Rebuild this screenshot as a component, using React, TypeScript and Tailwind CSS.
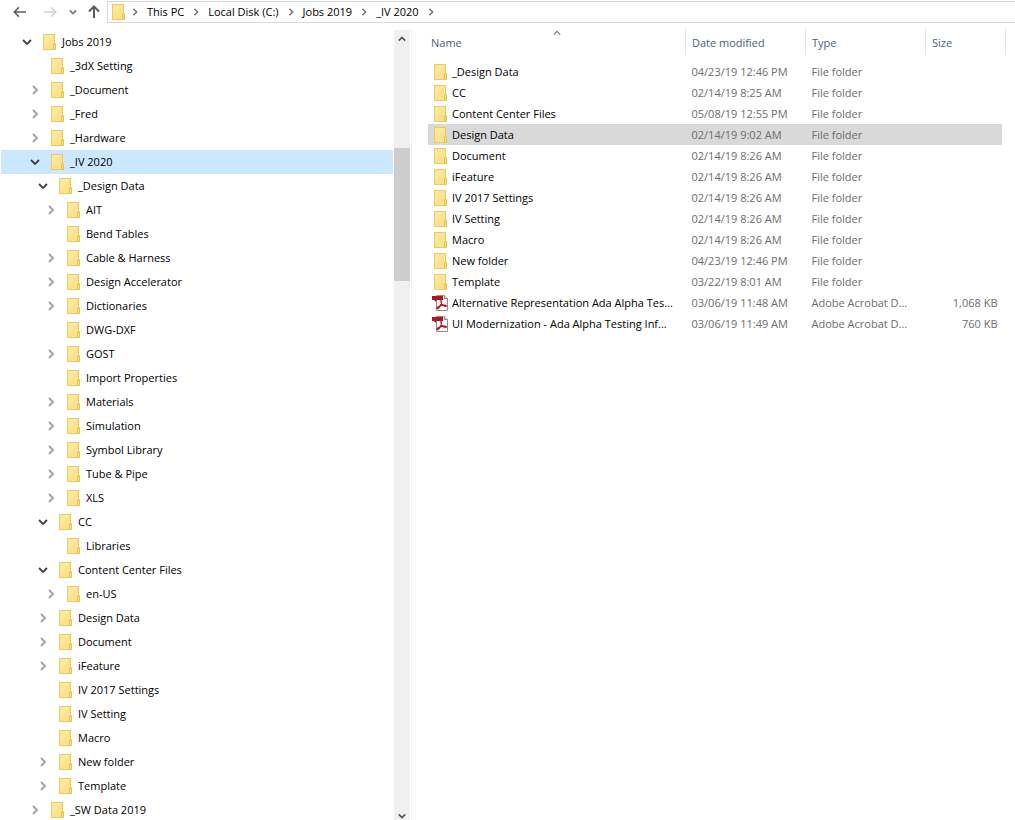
import { useState } from 'react'

type TreeNode = {
  name: string
  level: number
  state?: 'open' | 'closed'
}

type FileRow = {
  name: string
  modified: string
  type: string
  size?: string
}

const tree: TreeNode[] = [
  { name: 'Jobs 2019', level: 0, state: 'open' },
  { name: '_3dX Setting', level: 1 },
  { name: '_Document', level: 1, state: 'closed' },
  { name: '_Fred', level: 1, state: 'closed' },
  { name: '_Hardware', level: 1, state: 'closed' },
  { name: '_IV 2020', level: 1, state: 'open' },
  { name: '_Design Data', level: 2, state: 'open' },
  { name: 'AIT', level: 3, state: 'closed' },
  { name: 'Bend Tables', level: 3 },
  { name: 'Cable & Harness', level: 3, state: 'closed' },
  { name: 'Design Accelerator', level: 3, state: 'closed' },
  { name: 'Dictionaries', level: 3, state: 'closed' },
  { name: 'DWG-DXF', level: 3 },
  { name: 'GOST', level: 3, state: 'closed' },
  { name: 'Import Properties', level: 3 },
  { name: 'Materials', level: 3, state: 'closed' },
  { name: 'Simulation', level: 3, state: 'closed' },
  { name: 'Symbol Library', level: 3, state: 'closed' },
  { name: 'Tube & Pipe', level: 3, state: 'closed' },
  { name: 'XLS', level: 3, state: 'closed' },
  { name: 'CC', level: 2, state: 'open' },
  { name: 'Libraries', level: 3 },
  { name: 'Content Center Files', level: 2, state: 'open' },
  { name: 'en-US', level: 3, state: 'closed' },
  { name: 'Design Data', level: 2, state: 'closed' },
  { name: 'Document', level: 2, state: 'closed' },
  { name: 'iFeature', level: 2, state: 'closed' },
  { name: 'IV 2017 Settings', level: 2 },
  { name: 'IV Setting', level: 2 },
  { name: 'Macro', level: 2 },
  { name: 'New folder', level: 2, state: 'closed' },
  { name: 'Template', level: 2, state: 'closed' },
  { name: '_SW Data 2019', level: 1, state: 'closed' },
]

const files: FileRow[] = [
  { name: '_Design Data', modified: '04/23/19 12:46 PM', type: 'File folder' },
  { name: 'CC', modified: '02/14/19 8:25 AM', type: 'File folder' },
  { name: 'Content Center Files', modified: '05/08/19 12:55 PM', type: 'File folder' },
  { name: 'Design Data', modified: '02/14/19 9:02 AM', type: 'File folder' },
  { name: 'Document', modified: '02/14/19 8:26 AM', type: 'File folder' },
  { name: 'iFeature', modified: '02/14/19 8:26 AM', type: 'File folder' },
  { name: 'IV 2017 Settings', modified: '02/14/19 8:26 AM', type: 'File folder' },
  { name: 'IV Setting', modified: '02/14/19 8:26 AM', type: 'File folder' },
  { name: 'Macro', modified: '02/14/19 8:26 AM', type: 'File folder' },
  { name: 'New folder', modified: '04/23/19 12:46 PM', type: 'File folder' },
  { name: 'Template', modified: '03/22/19 8:01 AM', type: 'File folder' },
  { name: 'Alternative Representation Ada Alpha Tes...', modified: '03/06/19 11:48 AM', type: 'Adobe Acrobat D...', size: '1,068 KB' },
  { name: 'UI Modernization - Ada Alpha Testing Inf...', modified: '03/06/19 11:49 AM', type: 'Adobe Acrobat D...', size: '760 KB' },
]

const crumbs = ['This PC', 'Local Disk (C:)', 'Jobs 2019', '_IV 2020']

function FolderIcon() {
  return (
    <svg className="h-4 w-[13px] shrink-0" viewBox="0 0 13 16" aria-hidden="true">
      <rect x="0.5" y="0.5" width="11" height="15" fill="#fce28c" stroke="#eccb62" />
      <path d="M1 1h10L1 12z" fill="#fde79c" />
      <path d="M10.5 15.5V10l1-1 1 1v5.5z" fill="#fbdc77" stroke="#e6c052" />
    </svg>
  )
}

function PdfIcon() {
  return (
    <svg className="h-4 w-4 shrink-0" viewBox="0 0 16 16" aria-hidden="true">
      <path d="M4.5.5h8l3 3v12h-11z" fill="#fafafa" stroke="#8f8f8f" />
      <path d="M12.5.5v3h3" fill="#e4e4e4" stroke="#8f8f8f" />
      <path d="M0 1h11v4H0z" fill="#b5121f" />
      <path d="M2 5h2v2z" fill="#7a0d15" />
      <path
        d="M9 5.5c.9 1.8.3 3.7-.8 5.4S5.8 13.9 5.2 13.5s.8-2 3-2.7 5.8-.9 6.100-.1-1.900.8-3.400-.5S8.700 7.500 9 5.500z"
        fill="none"
        stroke="#b5121f"
        strokeWidth="1.3"
      />
    </svg>
  )
}

function Chevron({ className, d }: { className: string; d: string }) {
  return (
    <svg className={className} viewBox="0 0 10 10" fill="none" stroke="currentColor" aria-hidden="true">
      <path d={d} />
    </svg>
  )
}

const RIGHT = 'M3 1l4 4-4 4'
const DOWN = 'M1 3l4 4 4-4'
const UP = 'M1 7l4-4 4 4'

function Toolbar() {
  return (
    <header className="flex h-[23px] shrink-0 items-center pt-px">
      <nav className="flex w-[107px] shrink-0 items-center" aria-label="History">
        <button aria-label="Back" className="ml-[13px] text-[#5c5c5c]">
          <svg className="h-3 w-[14px]" viewBox="0 0 14 12" fill="none" stroke="currentColor" strokeWidth="1.6">
            <path d="M13 6H1.5M6 1.2L1.3 6 6 10.8" />
          </svg>
        </button>
        <button aria-label="Forward" className="ml-4 text-[#d2d2d2]">
          <svg className="h-3 w-[14px]" viewBox="0 0 14 12" fill="none" stroke="currentColor" strokeWidth="1.6">
            <path d="M1 6h11.5M8 1.2L12.7 6 8 10.8" />
          </svg>
        </button>
        <button aria-label="Recent locations" className="ml-3 text-[#777]">
          <Chevron className="size-2 stroke-2" d={DOWN} />
        </button>
        <button aria-label="Up" className="ml-[11px] text-[#5c5c5c]">
          <svg className="h-[14px] w-3" viewBox="0 0 12 14" fill="none" stroke="currentColor" strokeWidth="2">
            <path d="M6 13V1.5M1 6.5l5-5 5 5" />
          </svg>
        </button>
      </nav>
      <div className="flex h-[22px] flex-1 items-center border-y border-l border-[#d9d9d9] pl-1">
        <FolderIcon />
        {crumbs.map((crumb) => (
          <div key={crumb} className="flex items-center">
            <Chevron className="mx-[6px] size-2 stroke-2 text-[#777]" d={RIGHT} />
            <button className="px-[2px]">{crumb}</button>
          </div>
        ))}
        <Chevron className="mx-[6px] size-2 stroke-2 text-[#777]" d={RIGHT} />
      </div>
    </header>
  )
}

function TreeItem({ node, selected, onSelect }: { node: TreeNode; selected: boolean; onSelect: () => void }) {
  return (
    <li
      role="treeitem"
      aria-level={node.level + 1}
      aria-selected={selected}
      className={`ml-px flex h-6 items-center ${selected ? 'bg-[#cce8ff]' : ''}`}
      style={{ paddingLeft: 21 + node.level * 8 }}
    >
      {node.state ? (
        <button
          aria-label={`Toggle ${node.name}`}
          className={`mr-[11px] size-[10px] ${node.state === 'open' ? 'text-[#404040]' : 'text-[#a0a0a0]'}`}
        >
          <Chevron className="size-[10px] stroke-[1.8]" d={node.state === 'open' ? DOWN : RIGHT} />
        </button>
      ) : (
        <span className="mr-[11px] size-[10px]" />
      )}
      <button onClick={onSelect} className="flex flex-1 items-center gap-[6px] text-left">
        <FolderIcon />
        {node.name}
      </button>
    </li>
  )
}

function ScrollBar() {
  return (
    <div className="flex w-4 shrink-0 flex-col bg-[#f0f0f0] text-[#505050]">
      <button aria-label="Scroll up" className="flex h-[17px] items-center justify-center">
        <Chevron className="size-2 stroke-2" d={UP} />
      </button>
      <div className="flex flex-1 flex-col">
        <div className="grow-[101]" />
        <div className="grow-[133] bg-[#cdcdcd]" />
        <div className="grow-[522]" />
      </div>
      <button aria-label="Scroll down" className="flex h-[17px] items-end justify-center">
        <Chevron className="size-2 stroke-2" d={DOWN} />
      </button>
    </div>
  )
}

function FileTable() {
  const [selected, setSelected] = useState('Design Data')

  return (
    <table className="w-full table-fixed border-collapse text-left">
      <colgroup>
        <col />
        <col className="w-[120px]" />
        <col className="w-[120px]" />
        <col className="w-[76px]" />
        <col className="w-1" />
      </colgroup>
      <thead className="text-[#4c607a]">
        <tr className="h-[26px]">
          <th className="relative border-r border-[#e5e5e5] p-0 pt-[2px] pl-[3px] font-normal">
            <Chevron className="absolute top-0 left-1/2 size-2 -translate-x-1/2 stroke-[1.5] text-[#777]" d={UP} />
            <button>Name</button>
          </th>
          <th className="border-r border-[#e5e5e5] p-0 pt-[2px] pl-[6px] font-normal">
            <button>Date modified</button>
          </th>
          <th className="border-r border-[#e5e5e5] p-0 pt-[2px] pl-[6px] font-normal">
            <button>Type</button>
          </th>
          <th className="p-0 pt-[2px] pl-[6px] font-normal">
            <button>Size</button>
          </th>
          <td className="border-r border-[#e5e5e5] p-0" />
        </tr>
      </thead>
      <tbody className="text-[#6d6d6d]">
        <tr className="h-[6px]">
          <td colSpan={5} className="p-0" />
        </tr>
        {files.map((file) => {
          const cell = file.name === selected ? 'bg-[#d9d9d9]' : ''
          return (
            <tr key={file.name} className="h-[21px]" onClick={() => setSelected(file.name)}>
              <td className={`p-0 text-black ${cell}`}>
                <button className="flex w-full items-center whitespace-nowrap">
                  <span className="flex w-6 shrink-0 justify-center">{file.size ? <PdfIcon /> : <FolderIcon />}</span>
                  {file.name}
                </button>
              </td>
              <td className={`p-0 pl-[6px] whitespace-nowrap ${cell}`}>{file.modified}</td>
              <td className={`p-0 pl-[6px] whitespace-nowrap ${cell}`}>{file.type}</td>
              <td className={`p-0 pr-1 text-right whitespace-nowrap ${cell}`}>{file.size}</td>
              <td className="p-0" />
            </tr>
          )
        })}
      </tbody>
    </table>
  )
}

export default function App() {
  const [current, setCurrent] = useState(5)

  return (
    <div className="flex h-screen flex-col overflow-hidden bg-white font-['Open_Sans','Noto_Sans',sans-serif] text-[11px] leading-4 text-black">
      <Toolbar />
      <main className="flex min-h-0 flex-1">
        <aside className="mt-[7px] flex w-[412px] shrink-0 gap-px border-r border-[#f2f2f2] pr-px">
          <ul role="tree" aria-label="Folders" className="flex-1 overflow-hidden">
            {tree.map((node, i) => (
              <TreeItem key={i} node={node} selected={i === current} onSelect={() => setCurrent(i)} />
            ))}
          </ul>
          <ScrollBar />
        </aside>
        <section aria-label="Files" className="min-w-0 flex-1 pt-[6px] pr-[9px] pl-4">
          <FileTable />
        </section>
      </main>
    </div>
  )
}
